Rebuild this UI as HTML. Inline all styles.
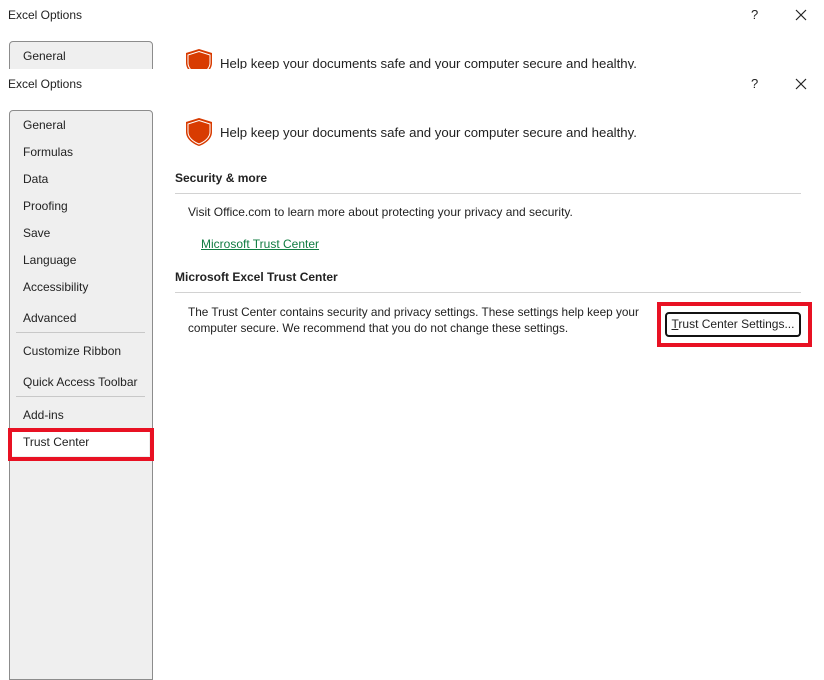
<!DOCTYPE html>
<html><head><style>
*{margin:0;padding:0;box-sizing:border-box}
body{width:824px;height:674px;background:#fff;position:relative;overflow:hidden;font-family:"Liberation Sans",sans-serif;color:#222;font-size:12px}
.a{position:absolute;white-space:nowrap}
.side{position:absolute;left:9px;width:144px;background:#efefef;border:1px solid #8c8c8c;border-radius:4px 4px 0 0}
.sep{position:absolute;left:16px;width:129px;height:1px;background:#c8c8c8}
.hr{position:absolute;left:175px;width:626px;height:1px;background:#d2d2d2}
.red{position:absolute;border:4px solid #e81123}
</style></head><body>
<div style="position:absolute;left:0;top:0;width:824px;height:69px;overflow:hidden">
<div class="a" style="left:8px;top:8px">Excel Options</div>
<div class="a" style="left:751px;top:7px;font-size:13px">?</div>
<svg class="a" style="left:795px;top:9px" width="12" height="12"><path d="M1 1L11 11M11 1L1 11" stroke="#222" stroke-width="1.2"/></svg>
<div class="side" style="top:41px;height:60px"></div>
<div class="a" style="left:23px;top:49px">General</div>
<svg class="a" style="left:185px;top:48px" width="28" height="30" viewBox="0 0 28 30"><path d="M14 1 L27 5 V15 C27 22 20 27 14 29 C8 27 1 22 1 15 V5 Z" fill="#d83b01"/><path d="M14 3.5 L25 7 V15 C25 21 19 25 14 27 C9 25 3 21 3 15 V7 Z" fill="none" stroke="#fff" stroke-width="1"/></svg>
<div class="a" style="left:220px;top:56px;font-size:13.2px">Help keep your documents safe and your computer secure and healthy.</div>
</div>
<div class="a" style="left:8px;top:77px">Excel Options</div>
<div class="a" style="left:751px;top:76px;font-size:13px">?</div>
<svg class="a" style="left:795px;top:78px" width="12" height="12"><path d="M1 1L11 11M11 1L1 11" stroke="#222" stroke-width="1.2"/></svg>
<div class="side" style="top:110px;height:570px"></div>
<div class="a" style="left:23px;top:118px">General</div>
<div class="a" style="left:23px;top:145px">Formulas</div>
<div class="a" style="left:23px;top:172px">Data</div>
<div class="a" style="left:23px;top:199px">Proofing</div>
<div class="a" style="left:23px;top:226px">Save</div>
<div class="a" style="left:23px;top:253px">Language</div>
<div class="a" style="left:23px;top:280px">Accessibility</div>
<div class="a" style="left:23px;top:311px">Advanced</div>
<div class="sep" style="top:332px"></div>
<div class="a" style="left:23px;top:344px">Customize Ribbon</div>
<div class="a" style="left:23px;top:375px">Quick Access Toolbar</div>
<div class="sep" style="top:396px"></div>
<div class="a" style="left:23px;top:408px">Add-ins</div>
<div style="position:absolute;left:12px;top:431px;width:137px;height:25px;background:#fff"></div>
<div class="a" style="left:23px;top:435px">Trust Center</div>
<div class="red" style="left:8px;top:428px;width:146px;height:33px"></div>

<svg class="a" style="left:185px;top:117px" width="28" height="30" viewBox="0 0 28 30"><path d="M14 1 L27 5 V15 C27 22 20 27 14 29 C8 27 1 22 1 15 V5 Z" fill="#d83b01"/><path d="M14 3.5 L25 7 V15 C25 21 19 25 14 27 C9 25 3 21 3 15 V7 Z" fill="none" stroke="#fff" stroke-width="1"/></svg>
<div class="a" style="left:220px;top:125px;font-size:13.2px">Help keep your documents safe and your computer secure and healthy.</div>

<div class="a" style="left:175px;top:171px;font-weight:bold">Security &amp; more</div>
<div class="hr" style="top:193px"></div>
<div class="a" style="left:188px;top:205px;font-size:12px">Visit Office.com to learn more about protecting your privacy and security.</div>
<div class="a" style="left:201px;top:237px;color:#107c41;text-decoration:underline;font-size:12px">Microsoft Trust Center</div>
<div class="a" style="left:175px;top:270px;font-weight:bold">Microsoft Excel Trust Center</div>
<div class="hr" style="top:292px"></div>
<div class="a" style="left:188px;top:304px;font-size:11.8px;line-height:16px">The Trust Center contains security and privacy settings. These settings help keep your<br>computer secure. We recommend that you do not change these settings.</div>
<div style="position:absolute;left:665px;top:312px;width:136px;height:25px;border:2px solid #111;border-radius:4px;background:#fdfdfd;text-align:center;line-height:21px;font-size:12px"><u>T</u>rust Center Settings...</div>
<div class="red" style="left:657px;top:302px;width:155px;height:45px"></div>
</body></html>
